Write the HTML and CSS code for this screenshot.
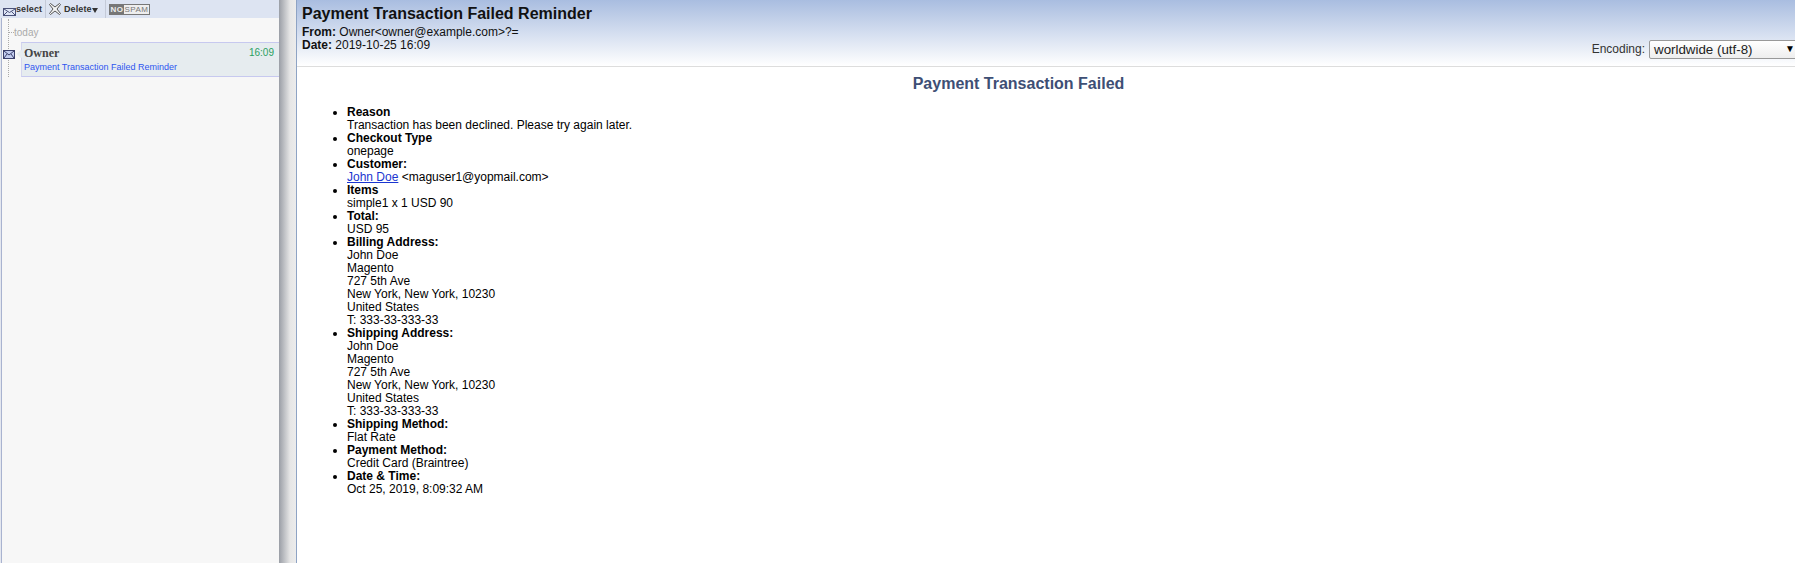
FILE: index.html
```html
<!DOCTYPE html>
<html>
	<head>
		<meta charset="UTF-8">
		<title>Webmail</title>
		<link rel="stylesheet" href="styles.css">
	</head>

	<body>
		<div id='side'>
			<div class='toolbar'>
				<span class='tool first'>
					<svg class='env' width='13' height='8' viewBox='0 0 13 8'><rect x='.5' y='.5' width='12' height='7' fill='#dfe6f7' stroke='#4a5178'/><path d='M1 1l5.500 3.500L12 1M1 7l3.500-3.500M12 7L8.500 3.500' fill='none' stroke='#4a5178'/></svg>
					<b class='label'>select</b>
				</span>
				<span class='tool middle'>
					<svg width='12' height='12' viewBox='0 0 12 12'><path d='M1.500.5L6 4 10.500.5l1 1L8 6l3.500 4.500-1 1L6 8l-4.500 3.500-1-1L4 6 .5 1.500z' fill='#f4f4f4' stroke='#555'/></svg>
					<b class='label del'>Delete</b><span class='arrow'></span>
				</span>
				<span class='tool last'>
					<span class='nospam'><span class='no'>NO</span><span class='spam'>SPAM</span></span>
				</span>
			</div>

			<div class='list'>
				<div class='day'>today</div>
				<div class='row'>
					<svg class='env-dark' width='12' height='9' viewBox='0 0 12 9'><rect x='.5' y='.5' width='11' height='8' fill='#c3cdf0' stroke='#3a3f6b'/><path d='M1 1l5 4 5-4M1 8l3-4M11 8L8 4' fill='none' stroke='#3a3f6b'/></svg>
					<div class='mail'>
						<div class='mail-top'><span class='sender'>Owner</span><span class='time'>16:09</span></div>
						<div class='subject'>Payment Transaction Failed Reminder</div>
					</div>
				</div>
			</div>
		</div>

		<div id='shadow'></div>

		<div id='main'>
			<div class='head'>
				<h1>Payment Transaction Failed Reminder</h1>
				<div><b>From:</b> Owner&lt;owner@example.com&gt;?=</div>
				<div><b>Date:</b> 2019-10-25 16:09</div>
				<div class='encoding'>
					<label>Encoding:</label>
					<span class='select'>worldwide (utf-8)<span class='select-arrow'>▼</span></span>
				</div>
			</div>

			<div class='body'>
				<h2>Payment Transaction Failed</h2>
				<ul>
					<li><b>Reason</b><br>Transaction has been declined. Please try again later.</li>
					<li><b>Checkout Type</b><br>onepage</li>
					<li><b>Customer:</b><br><a href='#'>John Doe</a> &lt;maguser1@yopmail.com&gt;</li>
					<li><b>Items</b><br>simple1 x 1 USD 90</li>
					<li><b>Total:</b><br>USD 95</li>
					<li><b>Billing Address:</b><br>John Doe<br>Magento<br>727 5th Ave<br>New York, New York, 10230<br>United States<br>T: 333-33-333-33</li>
					<li><b>Shipping Address:</b><br>John Doe<br>Magento<br>727 5th Ave<br>New York, New York, 10230<br>United States<br>T: 333-33-333-33</li>
					<li><b>Shipping Method:</b><br>Flat Rate</li>
					<li><b>Payment Method:</b><br>Credit Card (Braintree)</li>
					<li><b>Date &amp; Time:</b><br>Oct 25, 2019, 8:09:32 AM</li>
				</ul>
			</div>
		</div>
	</body>
</html>
```

FILE: styles.css
```css
html, body {
	height: 100%;
}

body {
	margin: 0;
	display: flex;
	overflow: hidden;
	font-family: "Liberation Sans", Arial, sans-serif;
	font-size: 12px;
	line-height: 13px;
	color: #000;
	background-color: #fff;
}

#side {
	width: 279px;
	flex: none;
	background-color: #f7f7f7;
	box-shadow: inset 1px 0 0 #e4e7ef, inset 2px 0 0 #a9b3d0;
}

.toolbar {
	height: 18px;
	display: flex;
	align-items: center;
	background-color: #dde4f2;
	color: #333;
}

.tool {
	display: flex;
	align-items: center;
	height: 100%;
	border-right: 1px solid #c4cad8;
}

.tool.first {
	width: 42px;
	padding-left: 3px;
}

.tool.middle {
	width: 56px;
	padding-left: 3px;
}

.tool.last {
	padding-left: 3px;
	border: none;
}

.label {
	font-size: 9px;
	letter-spacing: 0.1px;
}

.env {
	margin-top: 6px;
}

.del {
	margin-left: 3px;
}

.arrow {
	width: 0;
	height: 0;
	margin: 2px 0 0 0;
	border-left: 3.5px solid transparent;
	border-right: 3.5px solid transparent;
	border-top: 5px solid #333;
}

.nospam {
	display: flex;
	width: 41px;
	height: 11px;
	box-sizing: border-box;
	border: 1px solid #777;
	font-size: 8px;
	line-height: 9px;
	letter-spacing: 0.5px;
}

.no {
	width: 14px;
	background-color: #777;
	color: #eee;
	font-weight: bold;
	text-align: center;
}

.spam {
	flex: 1;
	background-color: #eee;
	color: #777;
	text-align: center;
}

.list {
	margin: 1px 0 0 8px;
	height: 58px;
	border-left: 1px dotted #aaa;
	box-sizing: border-box;
}

.day {
	display: flex;
	align-items: center;
	height: 13px;
	padding-top: 7px;
	color: #aaa;
	font-size: 10px;
}

.day::before {
	content: '';
	width: 5px;
	border-top: 1px dotted #aaa;
}

.row {
	display: flex;
	margin: 3px 0 0 -6px;
}

.env-dark {
	margin-top: 8px;
}

.mail {
	position: relative;
	flex: 1;
	margin-left: 6px;
	height: 35px;
	padding: 0 5px 0 2px;
	box-sizing: border-box;
	background-color: #e6ecef;
	border: 1px solid #c7c9ef;
	border-right: none;
	border-left-color: #d4d6ee;
}

.mail::before {
	content: '';
	position: absolute;
	left: -4px;
	top: 8px;
	width: 6px;
	height: 6px;
	transform: rotate(45deg);
	background-color: #e6ecef;
}

.mail-top {
	display: flex;
	justify-content: space-between;
	padding-top: 4px;
}

.sender {
	font-family: "Liberation Serif", serif;
	font-weight: bold;
	font-size: 12px;
	color: #444;
}

.time {
	margin-top: -1px;
	color: #2aa05f;
	font-size: 10px;
}

.subject {
	margin-top: 1px;
	color: #2e55f0;
	font-size: 9px;
}

#shadow {
	width: 17px;
	flex: none;
	background: linear-gradient(to right, #9a9ea6, #e6e6e6 65%, #ececec);
}

#main {
	flex: 1;
	min-width: 0;
	border-left: 1px solid #8ea3c4;
}

.head {
	position: relative;
	height: 67px;
	box-sizing: border-box;
	padding: 4px 0 0 5px;
	background: linear-gradient(to bottom, #a9bde0, #fff);
	border-bottom: 1px solid #ddd;
	color: #111;
}

h1 {
	margin: 0 0 2px;
	font-size: 16px;
	line-height: 20px;
}

.encoding {
	position: absolute;
	right: -5px;
	bottom: 7px;
	display: flex;
	align-items: center;
	color: #333;
}

.select {
	display: flex;
	justify-content: space-between;
	align-items: center;
	width: 151px;
	height: 19px;
	box-sizing: border-box;
	margin-left: 4px;
	padding: 0 4px 1px 4px;
	border: 1px solid #999;
	border-radius: 2px;
	font-size: 13.333px;
	color: #222;
	background: linear-gradient(to bottom, #fff, #eee);
}

.select-arrow {
	margin-top: -2px;
	font-size: 10px;
	color: #000;
}

.body {
	padding-right: 55px;
}

h2 {
	margin: 8px 0 13px;
	text-align: center;
	font-size: 16px;
	line-height: 18px;
	color: #3e4f75;
}

ul {
	margin: 0;
	padding-left: 50px;
}

a {
	color: #1a35d0;
}
```
